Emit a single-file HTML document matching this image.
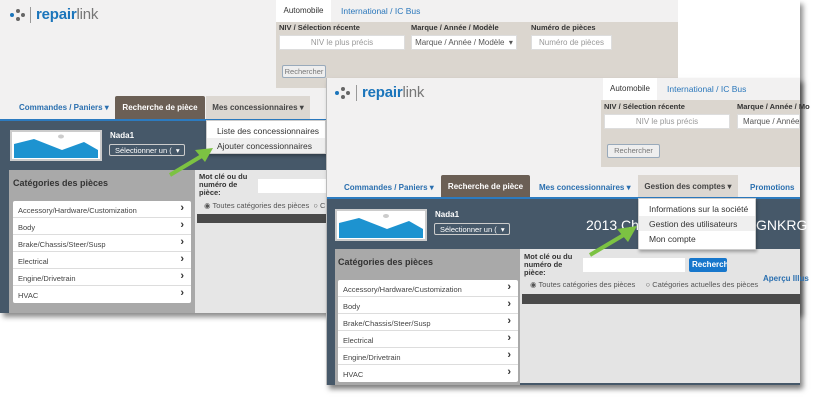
<!DOCTYPE html><html><head><meta charset="utf-8"><style>
*{box-sizing:border-box;margin:0;padding:0}
body{width:815px;height:402px;background:#fff;position:relative;overflow:hidden;font-family:"Liberation Sans",sans-serif;font-size:8px;color:#333}
.a{position:absolute}
.logo{font-size:15px;color:#1b75bb;font-weight:bold;letter-spacing:-0.2px}
.logo span{font-weight:normal;color:#777}
.blue{color:#2a77bb}
.nav{font-size:8px;font-weight:bold;color:#2a6faf;white-space:nowrap}
.inp{background:#fff;border:1px solid #ddd;font-size:8px;color:#999;text-align:center;line-height:13px}
.lab{font-size:7.5px;font-weight:bold;color:#333}
.row{height:17px;border-bottom:1px solid #ddd;font-size:7.5px;color:#444;padding:5px 0 0 5px;position:relative}
.row:after{content:"›";position:absolute;right:7px;top:1px;font-size:11px;font-weight:bold;color:#333}
.dd{background:#fff;border:1px solid #ccc;box-shadow:1px 2px 3px rgba(0,0,0,.3);font-size:8.5px;color:#333}
.dd div{height:15px;padding:3px 0 0 10px}
</style></head><body>
<div class="a" style="left:0;top:0;width:800px;height:313px;background:#fff;box-shadow:3px 4px 5px rgba(0,0,0,.45)"></div>
<div class="a" style="left:0;top:0;width:678px;height:119px;background:#f2f1f1"></div>
<svg class="a" style="left:9px;top:8px" width="18" height="16"><circle cx="3" cy="7" r="2" fill="#1b75bb"/><circle cx="9" cy="3" r="2" fill="#666"/><circle cx="9" cy="11" r="2" fill="#666"/><circle cx="14" cy="7" r="2" fill="#666"/></svg>
<div class="a" style="left:30px;top:7px;width:1px;height:16px;background:#999"></div>
<div class="a logo" style="left:36px;top:6px">repair<span>link</span></div>
<div class="a" style="left:276px;top:0;width:55px;height:22px;background:#fff;font-size:8px;text-align:center;line-height:22px">Automobile</div>
<div class="a blue" style="left:341px;top:6px;font-size:8.5px">International / IC Bus</div>
<div class="a" style="left:276px;top:22px;width:402px;height:66px;background:#dbd6cf"></div>
<div class="a lab" style="left:279px;top:23px">NIV / Sélection récente</div>
<div class="a inp" style="left:279px;top:35px;width:126px;height:15px">NIV le plus précis</div>
<div class="a lab" style="left:411px;top:23px">Marque / Année / Modèle</div>
<div class="a inp" style="left:411px;top:35px;width:106px;height:15px;color:#555">Marque / Année / Modèle &nbsp;▾</div>
<div class="a lab" style="left:531px;top:23px">Numéro de pièces</div>
<div class="a inp" style="left:531px;top:35px;width:81px;height:15px">Numéro de pièces</div>
<div class="a" style="left:282px;top:65px;width:44px;height:13px;border:1px solid #9ab;border-radius:2px;background:#eee;font-size:7.5px;color:#777;text-align:center;line-height:11px">Rechercher</div>
<div class="a nav" style="left:19px;top:103px">Commandes / Paniers ▾</div>
<div class="a nav" style="left:115px;top:96px;width:90px;height:23px;background:#6b5f55;color:#fff;text-align:center;line-height:23px;border-radius:2px 2px 0 0">Recherche de pièce</div>
<div class="a nav" style="left:206px;top:96px;width:104px;height:23px;background:#dcd7d1;color:#444;text-align:center;line-height:23px">Mes concessionnaires ▾</div>
<div class="a" style="left:0;top:119px;width:678px;height:2px;background:#2c7bc0"></div>
<div class="a" style="left:0;top:121px;width:678px;height:192px;background:#465869"></div>
<div class="a" style="left:10px;top:130px;width:92px;height:31px;background:#fff;border:2px solid #ccc"></div>
<svg class="a" style="left:14px;top:134px" width="84" height="24"><ellipse cx="47" cy="2.5" rx="3" ry="2" fill="#ccc"/><path d="M0 10L20 5L48 16L70 8L84 16V24H0Z" fill="#1d93d0"/></svg>
<div class="a" style="left:110px;top:131px;font-size:8px;font-weight:bold;color:#fff">Nada1</div>
<div class="a" style="left:109px;top:144px;width:76px;height:12px;border:1px solid #ccc;border-radius:2px;font-size:7.5px;color:#fff;padding:1px 0 0 5px">Sélectionner un ( &nbsp;▾</div>
<div class="a" style="left:9px;top:170px;width:186px;height:143px;background:#a9a9a9"></div>
<div class="a" style="left:13px;top:178px;font-size:9px;font-weight:bold;color:#333">Catégories des pièces</div>
<div class="a" style="left:13px;top:201px;width:178px;background:#fff;border-radius:2px">
<div class="row">Accessory/Hardware/Customization</div><div class="row">Body</div><div class="row">Brake/Chassis/Steer/Susp</div><div class="row">Electrical</div><div class="row">Engine/Drivetrain</div><div class="row" style="border:0">HVAC</div></div>
<div class="a" style="left:195px;top:170px;width:135px;height:143px;background:#e6e6e6"></div>
<div class="a lab" style="left:199px;top:173px;line-height:8px">Mot clé ou du<br>numéro de<br>pièce:</div>
<div class="a" style="left:258px;top:179px;width:70px;height:14px;background:#fff"></div>
<div class="a" style="left:204px;top:201px;font-size:7.5px;color:#555">◉ Toutes catégories des pièces &nbsp;○ C</div>
<div class="a" style="left:197px;top:214px;width:130px;height:9px;background:#4a4a4a"></div>
<div class="a dd" style="left:206px;top:120px;width:120px;height:34px;padding-top:2px"><div>Liste des concessionnaires</div><div style="background:#efefef">Ajouter concessionnaires</div></div>
<svg class="a" style="left:165px;top:140px" width="60" height="40"><path d="M5 35L40 14" stroke="#7cc242" stroke-width="4"/><path d="M48 8L30 10L40 22Z" fill="#7cc242"/></svg>
<div class="a" style="left:326px;top:78px;width:474px;height:307px;background:#fff;box-shadow:3px 4px 5px rgba(0,0,0,.5);border-left:1px solid #bbb"></div>
<div class="a" style="left:327px;top:78px;width:473px;height:120px;background:#f2f1f1"></div>
<svg class="a" style="left:334px;top:86px" width="18" height="16"><circle cx="3" cy="7" r="2" fill="#1b75bb"/><circle cx="9" cy="3" r="2" fill="#666"/><circle cx="9" cy="11" r="2" fill="#666"/><circle cx="14" cy="7" r="2" fill="#666"/></svg>
<div class="a" style="left:356px;top:85px;width:1px;height:16px;background:#999"></div>
<div class="a logo" style="left:362px;top:84px">repair<span>link</span></div>
<div class="a" style="left:603px;top:78px;width:54px;height:22px;background:#fff;font-size:8px;text-align:center;line-height:22px">Automobile</div>
<div class="a blue" style="left:667px;top:84px;font-size:8.5px">International / IC Bus</div>
<div class="a" style="left:601px;top:100px;width:199px;height:67px;background:#dbd6cf"></div>
<div class="a lab" style="left:604px;top:102px">NIV / Sélection récente</div>
<div class="a inp" style="left:604px;top:114px;width:126px;height:15px">NIV le plus précis</div>
<div class="a lab" style="left:737px;top:102px;white-space:nowrap">Marque / Année / Mo</div>
<div class="a inp" style="left:737px;top:114px;width:63px;height:15px;color:#555;text-align:left;padding-left:5px;white-space:nowrap;overflow:hidden">Marque / Année /</div>
<div class="a" style="left:607px;top:144px;width:53px;height:14px;border:1px solid #9ab;border-radius:2px;background:#eee;font-size:7.5px;color:#777;text-align:center;line-height:12px">Rechercher</div>
<div class="a nav" style="left:344px;top:183px">Commandes / Paniers ▾</div>
<div class="a nav" style="left:441px;top:175px;width:89px;height:23px;background:#6b5f55;color:#fff;text-align:center;line-height:23px;border-radius:2px 2px 0 0">Recherche de pièce</div>
<div class="a nav" style="left:539px;top:183px">Mes concessionnaires ▾</div>
<div class="a nav" style="left:638px;top:175px;width:100px;height:23px;background:#dcd7d1;color:#444;text-align:center;line-height:23px">Gestion des comptes ▾</div>
<div class="a nav" style="left:750px;top:183px">Promotions</div>
<div class="a" style="left:327px;top:197px;width:473px;height:2px;background:#2c7bc0"></div>
<div class="a" style="left:327px;top:199px;width:473px;height:186px;background:#465869"></div>
<div class="a" style="left:335px;top:209px;width:92px;height:32px;background:#fff;border:2px solid #ccc"></div>
<svg class="a" style="left:339px;top:213px" width="84" height="25"><ellipse cx="47" cy="3" rx="3" ry="2" fill="#ccc"/><path d="M0 10L20 5L48 16L70 8L84 16V25H0Z" fill="#1d93d0"/></svg>
<div class="a" style="left:435px;top:210px;font-size:8px;font-weight:bold;color:#fff">Nada1</div>
<div class="a" style="left:434px;top:223px;width:76px;height:12px;border:1px solid #ccc;border-radius:2px;font-size:7.5px;color:#fff;padding:1px 0 0 5px">Sélectionner un ( &nbsp;▾</div>
<div class="a" style="left:586px;top:217px;font-size:14px;color:#fff">2013 Che</div>
<div class="a" style="left:756px;top:217px;font-size:14px;color:#fff">GNKRG</div>
<div class="a" style="left:335px;top:249px;width:185px;height:136px;background:#a9a9a9"></div>
<div class="a" style="left:338px;top:257px;font-size:9px;font-weight:bold;color:#333">Catégories des pièces</div>
<div class="a" style="left:338px;top:280px;width:180px;background:#fff;border-radius:2px">
<div class="row">Accessory/Hardware/Customization</div><div class="row">Body</div><div class="row">Brake/Chassis/Steer/Susp</div><div class="row">Electrical</div><div class="row">Engine/Drivetrain</div><div class="row" style="border:0">HVAC</div></div>
<div class="a" style="left:520px;top:249px;width:280px;height:134px;background:#e4e4e4"></div>
<div class="a lab" style="left:524px;top:253px;line-height:8px">Mot clé ou du<br>numéro de<br>pièce:</div>
<div class="a" style="left:583px;top:258px;width:102px;height:14px;background:#fff"></div>
<div class="a" style="left:689px;top:258px;width:38px;height:14px;background:#1777cc;color:#fff;font-size:8px;font-weight:bold;line-height:14px;padding-left:3px;overflow:hidden;white-space:nowrap;border-radius:2px">Recherche</div>
<div class="a" style="left:763px;top:274px;font-size:8px;font-weight:bold;color:#2a6faf;white-space:nowrap">Aperçu Illus</div>
<div class="a" style="left:530px;top:280px;font-size:7.5px;color:#555;white-space:nowrap">◉ Toutes catégories des pièces &nbsp;&nbsp;&nbsp; ○ Catégories actuelles des pièces</div>
<div class="a" style="left:522px;top:294px;width:278px;height:10px;background:#4a4a4a"></div>
<div class="a dd" style="left:638px;top:198px;width:118px;height:52px;padding-top:2px"><div>Informations sur la société</div><div style="background:#efefef">Gestion des utilisateurs</div><div>Mon compte</div></div>
<svg class="a" style="left:585px;top:215px" width="60" height="45"><path d="M5 40L42 18" stroke="#7cc242" stroke-width="4"/><path d="M52 11L32 14L43 27Z" fill="#7cc242"/></svg>
</body></html>
